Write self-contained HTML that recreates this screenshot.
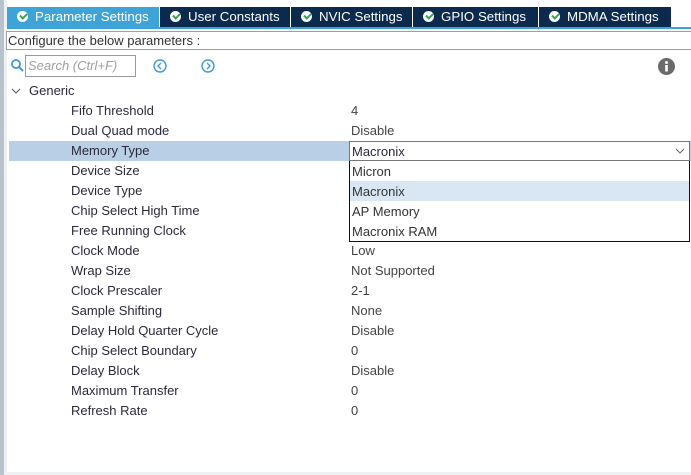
<!DOCTYPE html>
<html><head><style>
*{margin:0;padding:0;box-sizing:border-box}
body{width:691px;height:475px;background:#fff;font-family:"Liberation Sans",sans-serif;font-size:13px;color:#2a2a3a;position:relative;overflow:hidden}
.lb{position:absolute;left:0;top:0;width:4px;height:475px;background:#b8c2cc}
.lb2{position:absolute;left:4px;top:0;width:3px;height:475px;background:#eef0f2}
.bot{position:absolute;left:4px;top:472px;width:687px;height:3px;background:#eef0f2}
.tab{position:absolute;top:7px;height:21px;background:#0b2a4e;color:#fff;font-size:13.3px;line-height:20px;padding-left:10px;white-space:nowrap}
.tab.a{background:#3ea3d6}
.ck{display:inline-block;width:11px;height:11px;border-radius:50%;background:#fff;position:relative;vertical-align:-1px;margin-right:7px}
.ck:after{content:"";position:absolute;left:3px;top:2px;width:5px;height:3px;border-left:2px solid #3aa35a;border-bottom:2px solid #3aa35a;transform:rotate(-45deg)}
.bl{position:absolute;left:7px;top:27px;width:684px;height:2px;background:#3ea3d6}
.cfg{position:absolute;left:6px;top:31px;width:690px;height:19px;border:1px solid #9aa0a6;border-right:none;line-height:17px;padding-left:1px;font-size:13px;color:#333}
.srch{position:absolute;left:25px;top:55px;width:111px;height:22px;border:1px solid #9a9a9a;color:#a0a0a0;font-style:italic;line-height:20px;padding-left:2px}
.row{position:absolute;left:9px;width:682px;height:20px;line-height:20px}
.row .k{position:absolute;left:62px}
.row .v{position:absolute;left:342px;color:#444}
.sel{background:#b8cfe5}
.dd{position:absolute;left:349px;top:141px;width:341px;height:20px;border:1px solid #777;background:#fff;line-height:19px;padding-left:2px}
.list{position:absolute;left:349px;top:161px;width:341px;height:81px;border:1px solid #111;border-top:none;background:#fff}
.list div{height:20px;line-height:21px;padding-left:2px;color:#333}
</style></head><body>
<div class="lb"></div><div class="lb2"></div><div class="bot"></div>
<div class="tab a" style="left:7px;width:152px"><span class="ck"></span>Parameter Settings</div>
<div class="tab" style="left:160px;width:130px"><span class="ck"></span>User Constants</div>
<div class="tab" style="left:291px;width:121px"><span class="ck"></span>NVIC Settings</div>
<div class="tab" style="left:413px;width:125px"><span class="ck"></span>GPIO Settings</div>
<div class="tab" style="left:539px;width:132px"><span class="ck"></span>MDMA Settings</div>
<div class="bl"></div>
<div class="cfg">Configure the below parameters :</div>
<svg style="position:absolute;left:11px;top:59px" width="13" height="13"><circle cx="5" cy="5" r="4" fill="none" stroke="#3a9ad9" stroke-width="1.8"/><line x1="8" y1="8" x2="12" y2="12" stroke="#3a9ad9" stroke-width="2"/></svg>
<div class="srch">Search (Ctrl+F)</div>
<svg style="position:absolute;left:153px;top:59px" width="14" height="14"><circle cx="7" cy="7" r="6" fill="none" stroke="#3a9ad9" stroke-width="1.4"/><polyline points="8,4 5,7 8,10" fill="none" stroke="#3a9ad9" stroke-width="1.4"/></svg>
<svg style="position:absolute;left:201px;top:59px" width="14" height="14"><circle cx="7" cy="7" r="6" fill="none" stroke="#3a9ad9" stroke-width="1.4"/><polyline points="6,4 9,7 6,10" fill="none" stroke="#3a9ad9" stroke-width="1.4"/></svg>
<svg style="position:absolute;left:658px;top:58px" width="17" height="17"><circle cx="8.5" cy="8.5" r="8.5" fill="#6b6b6b"/><circle cx="8.5" cy="4.5" r="1.5" fill="#fff"/><rect x="7.2" y="7" width="2.6" height="6.5" fill="#fff"/></svg>
<svg style="position:absolute;left:11px;top:87px" width="10" height="8"><polyline points="1,2 5,6 9,2" fill="none" stroke="#555" stroke-width="1"/></svg>
<div style="position:absolute;left:29px;top:81px;line-height:20px">Generic</div>

<div class="row" style="top:101px"><span class="k">Fifo Threshold</span><span class="v">4</span></div>
<div class="row" style="top:121px"><span class="k">Dual Quad mode</span><span class="v">Disable</span></div>
<div class="row sel" style="top:141px"><span class="k">Memory Type</span></div>
<div class="row" style="top:161px"><span class="k">Device Size</span></div>
<div class="row" style="top:181px"><span class="k">Device Type</span></div>
<div class="row" style="top:201px"><span class="k">Chip Select High Time</span></div>
<div class="row" style="top:221px"><span class="k">Free Running Clock</span></div>
<div class="row" style="top:241px"><span class="k">Clock Mode</span><span class="v">Low</span></div>
<div class="row" style="top:261px"><span class="k">Wrap Size</span><span class="v">Not Supported</span></div>
<div class="row" style="top:281px"><span class="k">Clock Prescaler</span><span class="v">2-1</span></div>
<div class="row" style="top:301px"><span class="k">Sample Shifting</span><span class="v">None</span></div>
<div class="row" style="top:321px"><span class="k">Delay Hold Quarter Cycle</span><span class="v">Disable</span></div>
<div class="row" style="top:341px"><span class="k">Chip Select Boundary</span><span class="v">0</span></div>
<div class="row" style="top:361px"><span class="k">Delay Block</span><span class="v">Disable</span></div>
<div class="row" style="top:381px"><span class="k">Maximum Transfer</span><span class="v">0</span></div>
<div class="row" style="top:401px"><span class="k">Refresh Rate</span><span class="v">0</span></div>

<div class="dd">Macronix<svg style="position:absolute;right:4px;top:6px" width="10" height="7"><polyline points="1,1 5,5 9,1" fill="none" stroke="#666" stroke-width="1"/></svg></div>
<div class="list">
<div>Micron</div>
<div style="background:#d9e6f3">Macronix</div>
<div>AP Memory</div>
<div>Macronix RAM</div>
</div>
</body></html>
